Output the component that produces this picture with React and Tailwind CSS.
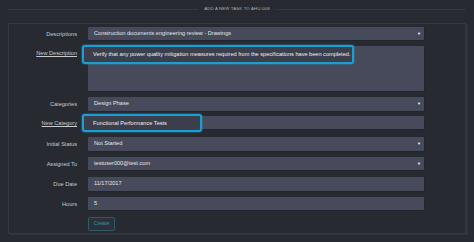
import React from "react";

const font = { fontFamily: '"Liberation Sans", Arial, sans-serif' };

const Arrow = () => (
  <span className="absolute right-[3px] top-1/2 -translate-y-1/2 text-[4px] leading-none text-white">▼</span>
);

const Field = ({ label, value, underline, select, h = "h-[14px]", mt, highlight, children }) => (
  <div className={`flex items-start ${mt}`}>
    <div className={`w-[68px] shrink-0 text-right text-[5.6px] text-[#c9cad0] ${underline ? "underline" : ""} leading-[14px]`}>
      {label}
    </div>
    <div className={`relative ml-[11px] w-[336px] ${h} bg-[#474a5b] rounded-[1px] shadow-[1px_1px_0_#22252b]`}>
      {!highlight && (
        <span className="absolute left-[6px] top-[7px] -translate-y-1/2 text-[5.6px] leading-none text-[#e4e5ea]">
          {value}
        </span>
      )}
      {select && <Arrow />}
      {children}
    </div>
  </div>
);

export default function App() {
  return (
    <div className="w-[474px] h-[242px] bg-[#272a31] overflow-hidden" style={font}>
      <div className="flex items-center pt-[6px] px-[8px]">
        <div className="h-px flex-1 bg-[#343740]" />
        <div className="px-[6px] text-[4.4px] leading-[6px] text-[#aeb0b8] tracking-[0.1px]">ADD A NEW TASK TO AHU-008</div>
        <div className="h-px flex-1 bg-[#343740]" />
      </div>
      <div className="ml-[8px] mt-[11px] w-[458px] h-[211px] border border-[#353841] pt-[3px] shadow-[2px_1px_0_#30333b]">
        <Field label="Descriptions" value="Construction documents engineering review - Drawings" select h="h-[13px]" />
        <Field label="New Description" underline h="h-[45px]" mt="mt-[5px]" highlight>
          <div className="absolute left-[-6px] top-[-1px] w-[272px] h-[19px] rounded-[3px] border-2 border-[#1c9fd0] bg-[#3b3e4b] shadow-[0_0_2px_#1c9fd0] flex items-center pl-[9px] text-[5.6px] text-[#eef0f4]">
            Verify that any power quality mitigation measures required from the specifications have been completed.
          </div>
        </Field>
        <Field label="Categories" value="Design Phase" select mt="mt-[6px]" />
        <Field label="New Category" underline h="h-[13px]" mt="mt-[5px]" highlight>
          <div className="absolute left-[-6px] top-[-2px] w-[120px] h-[18px] rounded-[3px] border-2 border-[#1c9fd0] bg-[#3b3e4b] shadow-[0_0_2px_#1c9fd0] flex items-center pl-[9px] text-[5.6px] text-[#eef0f4]">
            Functional Performance Tests
          </div>
        </Field>
        <Field label="Initial Status" value="Not Started" select mt="mt-[7px]" />
        <Field label="Assigned To" value="testuser000@test.com" select h="h-[13px]" mt="mt-[6px]" />
        <Field label="Due Date" value="11/17/2017" mt="mt-[6px]" />
        <Field label="Hours" value="5" h="h-[13px]" mt="mt-[6px]" />
        <div className="mt-[6px] ml-[79px]">
          <div className="w-[27px] h-[14px] border border-[#2f5a68] rounded-[2px] bg-[#2b3039] flex items-center justify-center text-[5.2px] text-[#3d93b5]">
            Create
          </div>
        </div>
      </div>
    </div>
  );
}
